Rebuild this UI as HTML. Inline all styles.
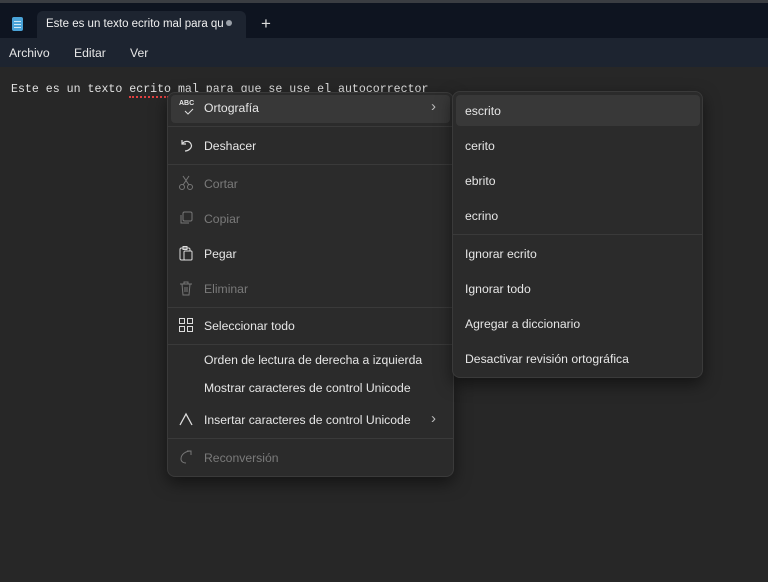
<!DOCTYPE html>
<html><head><meta charset="utf-8"><style>
*{margin:0;padding:0;box-sizing:border-box}
body{width:768px;height:582px;overflow:hidden;background:#272727;font-family:"Liberation Sans",sans-serif;color:#e6e6e6;position:relative}
.a{position:absolute;white-space:nowrap}
.t{font-size:12.2px;line-height:14px}
.dis{color:#7a7a7a}
.sep{position:absolute;height:1px;background:#3a3a3a}
svg{position:absolute}
</style></head><body>
<div class="a" style="left:0;top:0;width:768px;height:3px;background:#3a3d42"></div>
<div class="a" style="left:0;top:3px;width:768px;height:35px;background:#0e1420"></div>
<div class="a" style="left:37px;top:11px;width:209px;height:28px;background:#1d2430;border-radius:6px 6px 0 0"></div>
<div class="a" style="left:12px;top:17px;width:11px;height:14px;background:#4aa3d8;border-radius:2px"></div>
<div class="a" style="left:14px;top:21px;width:7px;height:1px;background:#cfe8f5;box-shadow:0 3px 0 #cfe8f5,0 6px 0 #cfe8f5"></div>
<div class="a" style="left:46px;top:18px;font-size:11.5px;color:#f0f0f0">Este es un texto ecrito mal para qu</div>
<div class="a" style="left:226px;top:20px;width:6px;height:6px;border-radius:50%;background:#9aa0a8"></div>
<div class="a" style="left:261px;top:14px;font-size:17px;color:#ddd">+</div>
<div class="a" style="left:0;top:38px;width:768px;height:29px;background:#1d2430"></div>
<div class="a t" style="left:9px;top:46px">Archivo</div>
<div class="a t" style="left:74px;top:46px">Editar</div>
<div class="a t" style="left:130px;top:46px">Ver</div>
<div class="a" style="left:11px;top:83px;font-family:'Liberation Mono',monospace;font-size:11.6px;color:#e0e0e0">Este es un texto ecrito mal para que se use el autocorrector</div>
<div class="a" style="left:129px;top:96px;width:40px;height:2px;border-bottom:2px dotted #e04040"></div>

<!-- main menu -->
<div class="a" style="left:167px;top:92px;width:287px;height:385px;background:#2b2b2b;border:1px solid #3a3a3a;border-radius:8px;box-shadow:0 6px 16px rgba(0,0,0,.5)"></div>
<div class="a" style="left:171px;top:95px;width:279px;height:28px;background:#383838;border-radius:4px"></div>
<div class="a" style="left:179px;top:100px;font-size:7px;font-weight:bold">ABC</div>
<svg style="left:184px;top:108px" width="10" height="7"><path d="M1 3l3 3 5-5" stroke="#ddd" fill="none"/></svg>
<div class="a t" style="left:204px;top:101px">Ortografía</div>
<div class="a" style="left:431px;top:98px;font-size:15px;color:#bbb">›</div>
<div class="sep" style="left:168px;top:126px;width:285px"></div>
<svg style="left:178px;top:137px" width="16" height="16"><path d="M4 3v4h4M4 7c2-3 7-4 9 0s-3 7-6 7" stroke="#ddd" fill="none" stroke-width="1.2"/></svg>
<div class="a t" style="left:204px;top:139px">Deshacer</div>
<div class="sep" style="left:168px;top:164px;width:285px"></div>
<svg style="left:178px;top:175px" width="16" height="16"><circle cx="4" cy="12" r="2.5" stroke="#777" fill="none"/><circle cx="12" cy="12" r="2.5" stroke="#777" fill="none"/><path d="M5 10L11 1M11 10L5 1" stroke="#777"/></svg>
<div class="a t dis" style="left:204px;top:177px">Cortar</div>
<svg style="left:178px;top:210px" width="16" height="16"><rect x="5" y="2" width="9" height="9" rx="1.5" stroke="#777" fill="none"/><path d="M3 5v8h8" stroke="#777" fill="none"/></svg>
<div class="a t dis" style="left:204px;top:212px">Copiar</div>
<svg style="left:178px;top:245px" width="16" height="16"><rect x="2" y="3" width="10" height="12" rx="1.5" stroke="#ddd" fill="none"/><rect x="6" y="6" width="8" height="9" rx="1" stroke="#ddd" fill="#2b2b2b"/><rect x="5" y="1.5" width="4" height="3" stroke="#ddd" fill="none"/></svg>
<div class="a t" style="left:204px;top:247px">Pegar</div>
<svg style="left:178px;top:280px" width="16" height="16"><path d="M2 4h12M6 4V2h4v2M4 4l1 11h6l1-11M7 7v5M9 7v5" stroke="#777" fill="none"/></svg>
<div class="a t dis" style="left:204px;top:282px">Eliminar</div>
<div class="sep" style="left:168px;top:307px;width:285px"></div>
<svg style="left:178px;top:317px" width="16" height="16"><g stroke="#ddd" fill="none"><rect x="1.5" y="1.5" width="5" height="5"/><rect x="9.5" y="1.5" width="5" height="5"/><rect x="1.5" y="9.5" width="5" height="5"/><rect x="9.5" y="9.5" width="5" height="5"/></g></svg>
<div class="a t" style="left:204px;top:319px">Seleccionar todo</div>
<div class="sep" style="left:168px;top:344px;width:285px"></div>
<div class="a t" style="left:204px;top:353px">Orden de lectura de derecha a izquierda</div>
<div class="a t" style="left:204px;top:381px">Mostrar caracteres de control Unicode</div>
<svg style="left:178px;top:411px" width="16" height="16"><path d="M2 14L8 3l6 11" stroke="#ddd" fill="none" stroke-width="1.3"/></svg>
<div class="a t" style="left:204px;top:413px">Insertar caracteres de control Unicode</div>
<div class="a" style="left:431px;top:410px;font-size:15px;color:#bbb">›</div>
<div class="sep" style="left:168px;top:438px;width:285px"></div>
<svg style="left:178px;top:449px" width="16" height="16"><path d="M9 2h4v4M13 2c-5 0-10 3-10 8 0 3 3 4 5 4" stroke="#777" fill="none"/></svg>
<div class="a t dis" style="left:204px;top:451px">Reconversión</div>

<!-- submenu -->
<div class="a" style="left:452px;top:91px;width:251px;height:287px;background:#2b2b2b;border:1px solid #3a3a3a;border-radius:8px;box-shadow:0 6px 16px rgba(0,0,0,.5)"></div>
<div class="a" style="left:456px;top:95px;width:244px;height:31px;background:#383838;border-radius:4px"></div>
<div class="a t" style="left:465px;top:104px">escrito</div>
<div class="a t" style="left:465px;top:139px">cerito</div>
<div class="a t" style="left:465px;top:174px">ebrito</div>
<div class="a t" style="left:465px;top:209px">ecrino</div>
<div class="sep" style="left:453px;top:234px;width:249px"></div>
<div class="a t" style="left:465px;top:247px">Ignorar ecrito</div>
<div class="a t" style="left:465px;top:282px">Ignorar todo</div>
<div class="a t" style="left:465px;top:317px">Agregar a diccionario</div>
<div class="a t" style="left:465px;top:352px">Desactivar revisión ortográfica</div>
</body></html>
